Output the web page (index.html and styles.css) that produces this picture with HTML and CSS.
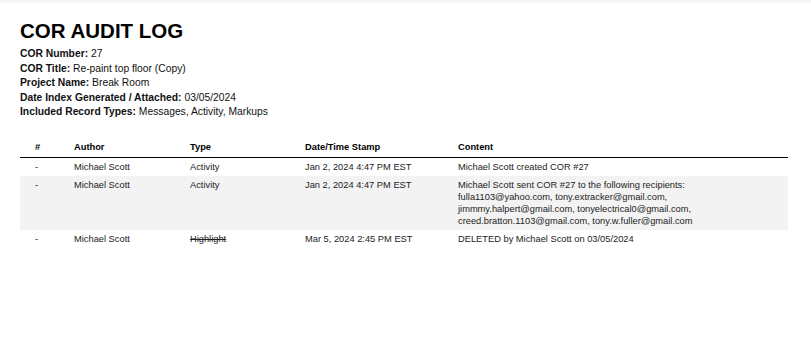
FILE: index.html
```html
<!DOCTYPE html>
<html lang="en">
  <head>
    <meta charset="UTF-8" />
    <meta name="viewport" content="width=device-width, initial-scale=1.0" />
    <title>COR Audit Log</title>
    <link rel="stylesheet" href="styles.css">
  </head>
  <body>
    <div id="page">
      <h1 class="title">COR AUDIT LOG</h1>
      <div class="meta">
        <div><b>COR Number:</b> 27</div>
        <div><b>COR Title:</b> Re-paint top floor (Copy)</div>
        <div><b>Project Name:</b> Break Room</div>
        <div><b>Date Index Generated / Attached:</b> 03/05/2024</div>
        <div><b>Included Record Types:</b> Messages, Activity, Markups</div>
      </div>

      <table class="log">
        <colgroup>
          <col class="col-num" />
          <col class="col-author" />
          <col class="col-type" />
          <col class="col-date" />
          <col />
        </colgroup>
        <thead>
          <tr>
            <th>#</th>
            <th>Author</th>
            <th>Type</th>
            <th>Date/Time Stamp</th>
            <th>Content</th>
          </tr>
        </thead>
        <tbody>
          <tr>
            <td>-</td>
            <td>Michael Scott</td>
            <td>Activity</td>
            <td>Jan 2, 2024 4:47 PM EST</td>
            <td>Michael Scott created COR #27</td>
          </tr>
          <tr class="alt">
            <td>-</td>
            <td>Michael Scott</td>
            <td>Activity</td>
            <td>Jan 2, 2024 4:47 PM EST</td>
            <td>
              Michael Scott sent COR #27 to the following recipients:<br />
              fulla1103@yahoo.com, tony.extracker@gmail.com,<br />
              jimmmy.halpert@gmail.com, tonyelectrical0@gmail.com,<br />
              creed.bratton.1103@gmail.com, tony.w.fuller@gmail.com
            </td>
          </tr>
          <tr>
            <td>-</td>
            <td>Michael Scott</td>
            <td><s>Highlight</s></td>
            <td>Mar 5, 2024 2:45 PM EST</td>
            <td>DELETED by Michael Scott on 03/05/2024</td>
          </tr>
        </tbody>
      </table>
    </div>
  </body>
</html>
```

FILE: styles.css
```css
* {
  box-sizing: border-box;
  margin: 0;
  padding: 0;
}

body {
  font-family: "Liberation Sans", Arial, sans-serif;
  background: linear-gradient(#efefef, #ffffff 4px) no-repeat;
  background-color: #fff;
  color: #000;
}

#page {
  padding: 19px 23px 0 20px;
}

.title {
  font-size: 20.5px;
  font-weight: bold;
  line-height: 24px;
  margin-bottom: 4px;
}

.meta {
  font-size: 10.3px;
  line-height: 14.5px;
  color: #111;
}

.log {
  width: 100%;
  margin-top: 18px;
  border-collapse: collapse;
  font-size: 9.3px;
  line-height: 12px;
  color: #222;
}

.col-num {
  width: 39px;
}

.col-author {
  width: 116px;
}

.col-type {
  width: 115px;
}

.col-date {
  width: 153px;
}

.log th {
  text-align: left;
  font-weight: bold;
  color: #000;
  padding: 3px 4px 4px 15px;
  border-bottom: 1.5px solid #000;
}

.log td {
  text-align: left;
  vertical-align: top;
  padding: 3px 4px 3px 15px;
}

.log tr.alt td {
  background-color: #f3f3f3;
}
```
